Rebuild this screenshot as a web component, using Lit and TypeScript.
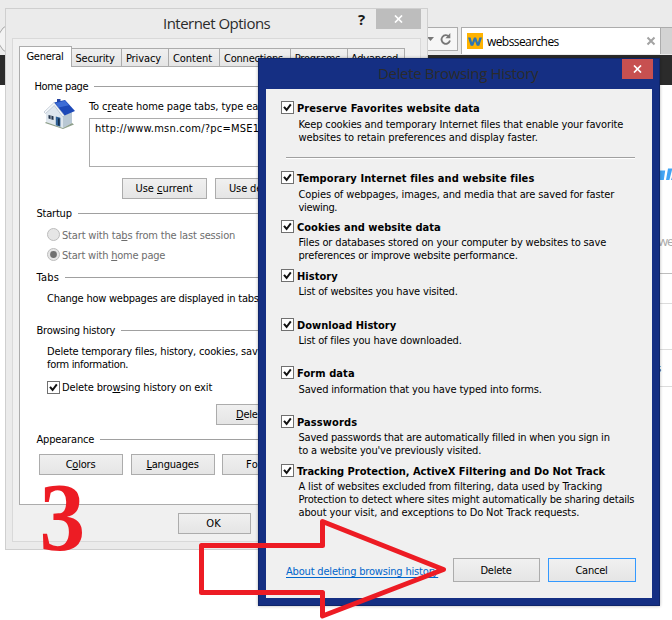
import { LitElement, html, css, svg } from "lit";
import { customElement } from "lit/decorators.js";

/** A line of label text, tracked so that its ink spans about `w` pixels. */
@customElement("ui-text")
class UiText extends LitElement {
  static properties = { w: { type: Number } };
  declare w: number;
  static styles = css`
    :host {
      display: inline-block;
      white-space: pre;
      flex: none;
      line-height: 13px;
    }
    .run {
      display: inline-block;
    }
  `;
  render() {
    return html`<span class="run"><slot></slot></span>`;
  }
  firstUpdated() {
    const run = this.renderRoot.querySelector<HTMLElement>(".run");
    const n = (this.textContent ?? "").length;
    if (!run || !this.w || !n) return;
    const natural = run.getBoundingClientRect().width;
    run.style.letterSpacing = `${(this.w - 0.8 - natural) / n}px`;
  }
}

@customElement("ui-check")
class UiCheck extends LitElement {
  static styles = css`
    :host {
      display: block;
      flex: none;
      width: 13px;
      height: 13px;
      box-sizing: border-box;
      border: 1px solid #707070;
      background: #fff;
    }
    svg {
      display: block;
    }
  `;
  render() {
    return html`<svg width="11" height="11" viewBox="0 0 11 11">
      <path d="M2 4.8 L4.6 8 L8.8 2.4" fill="none" stroke="#111" stroke-width="2" />
    </svg>`;
  }
}

@customElement("ui-button")
class UiButton extends LitElement {
  static styles = css`
    :host {
      display: flex;
      flex: none;
      align-items: center;
      justify-content: center;
      box-sizing: border-box;
      height: 21px;
      border: 1px solid #acacac;
      background: linear-gradient(#f0f0f0, #e5e5e5);
    }
  `;
  render() {
    return html`<slot></slot>`;
  }
}

interface HistoryItem {
  label: string;
  w: number;
  gap: number;
  lines: [string, number][];
}

const items: HistoryItem[] = [
  {
    label: "Preserve Favorites website data", w: 183.5, gap: 3,
    lines: [
      ["Keep cookies and temporary Internet files that enable your favorite", 325.5],
      ["websites to retain preferences and display faster.", 240],
    ],
  },
  {
    label: "Temporary Internet files and website files", w: 237.5, gap: 3,
    lines: [
      ["Copies of webpages, images, and media that are saved for faster", 316.5],
      ["viewing.", 39.5],
    ],
  },
  {
    label: "Cookies and website data", w: 144.5, gap: 2,
    lines: [
      ["Files or databases stored on your computer by websites to save", 308.5],
      ["preferences or improve website performance.", 220],
    ],
  },
  { label: "History", w: 41.5, gap: 2, lines: [["List of websites you have visited.", 160]] },
  { label: "Download History", w: 100, gap: 2, lines: [["List of files you have downloaded.", 164]] },
  { label: "Form data", w: 58.5, gap: 3, lines: [["Saved information that you have typed into forms.", 244]] },
  {
    label: "Passwords", w: 61, gap: 2,
    lines: [
      ["Saved passwords that are automatically filled in when you sign in", 312],
      ["to a website you've previously visited.", 183.5],
    ],
  },
  {
    label: "Tracking Protection, ActiveX Filtering and Do Not Track", w: 309, gap: 2,
    lines: [
      ["A list of websites excluded from filtering, data used by Tracking", 304.5],
      ["Protection to detect where sites might automatically be sharing details", 336.5],
      ["about your visit, and exceptions to Do Not Track requests.", 281.5],
    ],
  },
];

const house = svg`
  <path d="M3 15 L12 7 L20 18 V30 L3 24 Z" fill="#dfe7ee"/>
  <path d="M20 18 L29 14 V25 L20 30 Z" fill="#b9c8d4"/>
  <path d="M3 24 L20 30 L29 25 L31 26.5 L20 31 L2 25 Z" fill="#8fa08c"/>
  <path d="M14 1 h3.5 v5 h-3.5z" fill="#2744a0"/>
  <path d="M11 4.5 L22 2 L32 13 L20.5 18 Z" fill="#1d49b8"/>
  <path d="M12.5 5 L22 2.8 L26 7.2 L15.5 9.6 Z" fill="#3c6cd6"/>
  <path d="M11 4.5 L1 14 L2.5 15.5 L11.3 7.5 L19.8 18.8 L21.5 17.6 Z" fill="#f4f7fa" stroke="#9aa9b8" stroke-width=".5"/>
  <path d="M5.5 17 l5 1.3 v3.6 l-5 -1.5z" fill="#25364c"/>
  <path d="M8 17.6 v3.7" stroke="#dfe7ee" stroke-width=".8"/>
  <path d="M12.8 18.6 l4.6 1.2 v9 l-4.6 -1.6z" fill="#2d5f95"/>
  <path d="M15 20.3 l1.6 .4 v7 l-1.6 -.5z" fill="#16304f"/>`;

@customElement("app-root")
class AppRoot extends LitElement {
  static styles = css`
    :host {
      display: block;
      position: relative;
      width: 672px;
      height: 620px;
      overflow: hidden;
      background: #fff;
      color: #000;
      font: 11px/13px "DejaVu Sans Condensed", "DejaVu Sans", sans-serif;
    }
    * { box-sizing: border-box; }
    u { text-underline-offset: 1px; text-decoration-thickness: 1px; }

    /* browser behind the dialogs */
    .browser { display: flex; flex-direction: column; height: 620px; }
    .toolbar {
      display: flex; height: 55px; background: #ebebeb; padding-top: 27px; flex: none;
    }
    .back { display: block; width: 8px; height: 32px; margin-top: -4px; flex: none; }
    .address {
      width: 450px; height: 24px; border: 1px solid #acacac; background: #f6f6f6;
      display: flex; justify-content: flex-end; align-items: center; padding-right: 5px; gap: 6px;
      flex: none;
    }
    .btab {
      display: flex; align-items: center; width: 200px; height: 27px; margin-left: 3px; flex: none;
      border: 1px solid #acacac; border-bottom: 0; background: #fff; padding: 0 4px 0 5px;
      font: 12px/16px "Open Sans", sans-serif;
    }
    .fav {
      width: 16px; height: 16px; background: #ffb300; margin: 0 4px 0 0; display: block;
    }
    .grow { flex: 1; }
    .newtab { width: 12px; height: 27px; background: #d3d3d3; border-top: 1px solid #acacac; flex: none; }
    .strip { height: 30px; background: #2b2b2b; flex: none; }
    .page { display: flex; flex-direction: column; align-items: flex-end; }
    .logo { margin-top: 83px; display: block; }
    .we {
      margin-top: 52px; width: 14px; height: 18px; color: #aaa;
      font: 13px/18px "Open Sans", sans-serif; letter-spacing: -1px;
    }
    .rule { width: 14px; height: 1px; background: #dcdcdc; }
    .r1 { margin-top: 23px; background: #bdbdbd; }
    .r2 { margin-top: 29px; }
    .r3 { margin-top: 45px; }
    .r4 { margin-top: 10px; }
    .s { margin-top: 11px; width: 16px; height: 15px; color: #333; font: 11px/14px "Open Sans", sans-serif; }

    /* Internet Options */
    .options {
      position: absolute; left: 5px; top: 8px; width: 423px; height: 542px;
      background: #ebebeb; border: 1px solid #cfcfcf; padding: 0 6px 7px;
      display: flex; flex-direction: column;
    }
    .titlebar { height: 29px; display: flex; flex: none; align-items: flex-start; }
    .title { font: 15px/20px "Open Sans", sans-serif; color: #2b2b2b; }
    .options .title { margin: 4px 0 0 151px; width: 107px; }
    .q { font: bold 15px/20px "Open Sans", sans-serif; margin: 0 0 0 88px; width: 18px; color: #1a1a1a; }
    .close {
      display: flex; align-items: center; justify-content: center; width: 45px; height: 20px;
      background: #bdbdbd;
    }
    .body {
      flex: 1; border: 1px solid #d9d9d9; background: #f0f0f0; padding: 7px 6px 0;
      display: flex; flex-direction: column;
    }
    .tabs { display: flex; align-items: flex-end; height: 20px; flex: none; }
    .tab {
      height: 19px; border: 1px solid #acacac; border-left: 0; flex: none;
      background: linear-gradient(#f0f0f0, #e5e5e5); display: flex; justify-content: center;
      padding: 3px 3px 0 0; margin-bottom: -1px;
    }
    .tab.on {
      height: 21px; background: #fff; border-left: 1px solid #acacac; border-bottom: 0; width: 53px;
      z-index: 1; padding-right: 1px;
    }
    .t2 { width: 50px; } .t3 { width: 47px; } .t4 { width: 51px; }
    .t5 { width: 71px; } .t6 { width: 57px; } .t7 { width: 57px; }
    .panel {
      height: 439px; border: 1px solid #acacac; background: #fff; padding: 13px 0 0 17px;
      display: flex; flex-direction: column; flex: none;
    }
    .group { display: flex; align-items: center; gap: 6px; height: 13px; flex: none; }
    .group::after { content: ""; height: 1px; background: #a0a0a0; flex: 1; }
    .group ui-text { margin-left: -0.5px; }
    .home { margin-left: -2px; }
    .homerow { display: flex; margin: 5px 0 0 6px; height: 69px; flex: none; }
    .homecol { display: flex; flex-direction: column; flex: 1; padding: 2px 0 0 13px; }
    .field { height: 49px; border: 1px solid #acacac; margin-top: 5px; padding: 3px 0 0 5px; }
    .row { display: flex; flex: none; }
    .pages { margin: 11px 0 8px 85px; gap: 8px; }
    .use1 { width: 85px; padding-right: 1px; }
    .use2 { width: 85px; justify-content: flex-start; padding-left: 13px; }
    .opt { display: flex; gap: 2px; margin: 8px 0 0 10px; height: 13px; color: #6d6d6d; flex: none; }
    .opt ui-text { margin-top: 1px; }
    .opt + .opt { margin-top: 7px; }
    .radio { display: block; }
    .tabsgroup { margin-top: 10px; }
    .para { margin: 8px 0 0 10px; display: flex; flex-direction: column; }
    .hist { margin-top: 19px; }
    .exit { display: flex; gap: 2px; margin: 10px 0 0 10px; height: 13px; }
    .del { width: 85px; margin: 10px 0 8px 179px; justify-content: flex-start; padding-left: 19px; }
    .looks { margin: 8px 0 0 2px; gap: 8px; }
    .c1 { width: 84px; padding-right: 1px; }
    .c3 { width: 84px; margin-left: -1px; justify-content: flex-start; padding-left: 23px; }
    .ok { width: 73px; margin: 8px 0 0 159px; padding-right: 2px; }

    /* Delete Browsing History */
    .dialog {
      position: absolute; left: 258px; top: 58px; width: 402px; height: 548px;
      background: #152f83; border: 1px solid #0f2569; padding: 0 7px 7px;
      display: flex; flex-direction: column; box-shadow: 0 0 3px rgba(0, 0, 0, 0.3);
    }
    .dtitle { height: 30px; display: flex; flex: none; align-items: flex-start; }
    .dialog .title { margin: 4px 0 0 112px; }
    .red { background: #c75050; width: 31px; margin: 0 -1px 0 auto; }
    .sheet { flex: 1; background: #f0f0f0; padding: 12px 0 0 15px; display: flex; flex-direction: column; }
    .list { display: grid; grid-template-rows: 70px 49px 49px 49px 48px 49px 49px 94px; }
    .item { display: grid; grid-template-columns: 16px 1fr; align-content: start; }
    .item b { display: flex; padding-top: 1px; }
    .desc { grid-column: 2; padding-left: 1.5px; display: flex; flex-direction: column; }
    .item:first-child .desc { height: 52px; }
    .item:first-child::after {
      content: ""; grid-column: 1 / 3; height: 1px; background: #a0a0a0; border-bottom: 1px solid #fff;
      margin: -10px 17px 0 5px;
    }
    .foot { display: flex; padding-left: 5px; }
    .link { color: #0066cc; margin-top: 7px; width: 167px; }
    .link u { text-underline-offset: 2px; }
    .foot ui-button { height: 24px; width: 87px; margin-right: 8px; padding-right: 1px; }
    .foot .cancel { border-color: #3399ff; width: 88px; }

    /* annotations */
    .three {
      position: absolute; left: 38px; top: 485px; color: #ed1c24;
      font: bold 97px/66px "Liberation Serif", serif;
      transform: scaleX(0.94);
    }
    .arrow { position: absolute; left: 195px; top: 512px; }
    .speck { position: absolute; left: 440px; top: 226px; width: 1px; height: 5px; background: #87ceeb; }
  `;

  browserWindow() {
    return html`<div class="browser">
      <div class="toolbar">
        <svg class="back" width="8" height="32" viewBox="0 0 8 32">
          <circle cx="14" cy="16" r="15.5" fill="#f3f3f3" stroke="#a6a6a6" />
        </svg>
        <div class="address">
          <svg width="7" height="4"><path d="M0 0 H7 L3.5 4 Z" fill="#777" /></svg>
          <svg width="12" height="13" viewBox="0 0 12 13">
            <path d="M9 3.6 A4.3 4.3 0 1 0 10 7.6" fill="none" stroke="#777" stroke-width="1.8" />
            <path d="M10.3 0 V5.2 H5.4 Z" fill="#777" />
          </svg>
        </div>
        <div class="btab">
          <svg class="fav" viewBox="0 0 16 16">
            <path
              d="M1 4.5 H3.6 L5.1 9.6 L6.9 4.5 H9.1 L10.9 9.6 L12.4 4.5 H15 L12.3 12.8 H9.8 L8 8 L6.2 12.8 H3.7 Z"
              fill="#2e75b0"
            />
          </svg>
          <ui-text w="72.5">webssearches</ui-text>
          <span class="grow"></span>
          <svg width="10" height="10" viewBox="0 0 10 10">
            <path d="M1.5 1.5 L8.5 8.5 M8.5 1.5 L1.5 8.5" stroke="#a3a3a3" stroke-width="2" />
          </svg>
        </div>
        <div class="newtab"></div>
      </div>
      <div class="strip"></div>
      <div class="page">
        <svg class="logo" width="12" height="12" viewBox="0 0 12 12">
          <path d="M0 2.5 H5.2 L3.8 12 H0 Z M8 0.5 H12 V2 L9.4 12 H6 Z M12 9 V12 H11 Z" fill="#42a5f5" />
        </svg>
        <div class="we">we</div>
        <div class="rule r1"></div>
        <div class="rule r2"></div>
        <div class="rule r3"></div>
        <div class="s">s</div>
        <div class="rule r4"></div>
      </div>
    </div>`;
  }

  optionsWindow() {
    return html`<div class="options">
      <div class="titlebar">
        <ui-text class="title" w="108">Internet Options</ui-text>
        <span class="q">?</span>
        <span class="close">
          <svg width="9" height="8" viewBox="0 0 9 8"><path d="M1 .5 L8 7.5 M8 .5 L1 7.5" stroke="#fff" stroke-width="1.7" /></svg>
        </span>
      </div>
      <div class="body">
        <div class="tabs">
          <div class="tab on"><ui-text w="38">General</ui-text></div>
          <div class="tab t2"><ui-text w="40">Security</ui-text></div>
          <div class="tab t3"><ui-text w="36">Privacy</ui-text></div>
          <div class="tab t4"><ui-text w="40">Content</ui-text></div>
          <div class="tab t5"><ui-text w="60">Connections</ui-text></div>
          <div class="tab t6"><ui-text w="46.5">Programs</ui-text></div>
          <div class="tab t7"><ui-text w="48">Advanced</ui-text></div>
        </div>
        <div class="panel">
          <div class="group home"><ui-text w="54.5">Home page</ui-text></div>
          <div class="homerow">
            <svg width="33" height="32" viewBox="0 0 33 32">${house}</svg>
            <div class="homecol">
              <ui-text w="170">To c<u>r</u>eate home page tabs, type ea</ui-text>
              <div class="field"><ui-text w="165">http://www.msn.com/?pc=MSE1</ui-text></div>
            </div>
          </div>
          <div class="row pages">
            <ui-button class="use1"><ui-text w="58">Use <u>c</u>urrent</ui-text></ui-button>
            <ui-button class="use2"><ui-text w="34">Use de</ui-text></ui-button>
          </div>
          <div class="group"><ui-text w="36">Startup</ui-text></div>
          <div class="opt">
            <svg class="radio" width="13" height="13"><circle cx="6.5" cy="6.5" r="6" fill="#e6e6e6" stroke="#bcbcbc" /></svg>
            <ui-text w="174">Start with ta<u>b</u>s from the last session</ui-text>
          </div>
          <div class="opt">
            <svg class="radio" width="13" height="13">
              <circle cx="6.5" cy="6.5" r="6" fill="#e6e6e6" stroke="#bcbcbc" />
              <circle cx="6.5" cy="6.5" r="3.4" fill="#707070" />
            </svg>
            <ui-text w="104">Start with <u>h</u>ome page</ui-text>
          </div>
          <div class="group tabsgroup"><ui-text w="23.5">Tabs</ui-text></div>
          <div class="para"><ui-text w="212.5">Change how webpages are displayed in tabs</ui-text></div>
          <div class="group hist"><ui-text w="79.5">Browsing history</ui-text></div>
          <div class="para">
            <ui-text w="211.5">Delete temporary files, history, cookies, sav</ui-text>
            <ui-text w="82">form information.</ui-text>
          </div>
          <div class="exit"><ui-check></ui-check><ui-text w="151">Delete bro<u>w</u>sing history on exit</ui-text></div>
          <ui-button class="del"><ui-text w="22.5"><u>D</u>ele</ui-text></ui-button>
          <div class="group"><ui-text w="58.5">Appearance</ui-text></div>
          <div class="row looks">
            <ui-button class="c1"><ui-text w="30.5">C<u>o</u>lors</ui-text></ui-button>
            <ui-button class="c1"><ui-text w="53"><u>L</u>anguages</ui-text></ui-button>
            <ui-button class="c3"><ui-text w="13">Fo</ui-text></ui-button>
          </div>
        </div>
        <ui-button class="ok"><ui-text w="15.5">OK</ui-text></ui-button>
      </div>
    </div>`;
  }

  historyDialog() {
    return html`<div class="dialog">
      <div class="dtitle">
        <ui-text class="title" w="161">Delete Browsing History</ui-text>
        <span class="close red">
          <svg width="9" height="8" viewBox="0 0 9 8"><path d="M1 .5 L8 7.5 M8 .5 L1 7.5" stroke="#fff" stroke-width="1.7" /></svg>
        </span>
      </div>
      <div class="sheet">
        <div class="list">
          ${items.map(
            (it) => html`<div class="item">
              <ui-check></ui-check>
              <b><ui-text .w=${it.w}>${it.label}</ui-text></b>
              <div class="desc" style="padding-top:${it.gap}px">
                ${it.lines.map(([t, w]) => html`<ui-text .w=${w}>${t}</ui-text>`)}
              </div>
            </div>`
          )}
        </div>
        <div class="foot">
          <ui-text class="link" w="153"><u>About deleting browsing history</u></ui-text>
          <ui-button><ui-text w="32">Delete</ui-text></ui-button>
          <ui-button class="cancel"><ui-text w="33">Cancel</ui-text></ui-button>
        </div>
      </div>
    </div>`;
  }

  render() {
    return html`
      ${this.browserWindow()} ${this.optionsWindow()} ${this.historyDialog()}
      <div class="speck"></div>
      <div class="three">3</div>
      <svg class="arrow" width="255" height="110" viewBox="195 512 255 110">
        <path
          d="M201.5 545.5 H322.5 V521.5 L443.5 569.5 L322.5 616 V592.5 H201.5 Z"
          fill="none" stroke="#ed1c24" stroke-width="5" stroke-linejoin="round"
        />
      </svg>
    `;
  }
}
